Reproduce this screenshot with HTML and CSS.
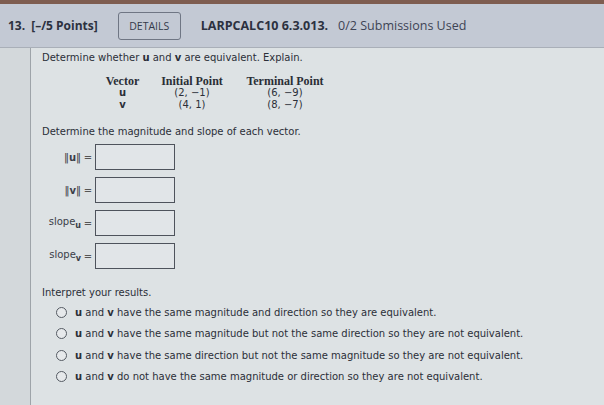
FILE: index.html
```html
<!DOCTYPE html>
<html>
<head>
<meta charset="utf-8">
<link rel="stylesheet" href="styles.css">
</head>
<body>
<div class="topbar"></div>
<div class="header">
  <span class="qnum">13.</span>
  <span class="points">[–/5 Points]</span>
  <span class="details">DETAILS</span>
  <span class="code">LARPCALC10 6.3.013.</span>
  <span class="subs">0/2 Submissions Used</span>
</div>
<div class="main">
  <div class="gutter"></div>
  <div class="content">
    <p class="line first">Determine whether <b>u</b> and <b>v</b> are equivalent. Explain.</p>
    <div class="vtable">
      <div class="th c1">Vector</div><div class="th c2">Initial Point</div><div class="th c3">Terminal Point</div>
      <div class="td c1"><b>u</b></div><div class="td c2">(2, −1)</div><div class="td c3">(6, −9)</div>
      <div class="td c1"><b>v</b></div><div class="td c2">(4, 1)</div><div class="td c3">(8, −7)</div>
    </div>
    <p class="line second">Determine the magnitude and slope of each vector.</p>
    <div class="answers">
      <div class="lbl">‖<b>u</b>‖</div><div class="eq">=</div><div class="box"></div>
      <div class="lbl">‖<b>v</b>‖</div><div class="eq">=</div><div class="box"></div>
      <div class="lbl">slope<sub><b>u</b></sub></div><div class="eq">=</div><div class="box"></div>
      <div class="lbl">slope<sub><b>v</b></sub></div><div class="eq">=</div><div class="box"></div>
    </div>
    <p class="line third">Interpret your results.</p>
    <ul class="opts">
      <li><span class="radio"></span><span><b>u</b> and <b>v</b> have the same magnitude and direction so they are equivalent.</span></li>
      <li><span class="radio"></span><span><b>u</b> and <b>v</b> have the same magnitude but not the same direction so they are not equivalent.</span></li>
      <li><span class="radio"></span><span><b>u</b> and <b>v</b> have the same direction but not the same magnitude so they are not equivalent.</span></li>
      <li><span class="radio"></span><span><b>u</b> and <b>v</b> do not have the same magnitude or direction so they are not equivalent.</span></li>
    </ul>
  </div>
</div>
</body>
</html>
```
FILE: styles.css
```css
html, body {
  margin: 0;
  padding: 0;
  width: 604px;
  height: 405px;
  overflow: hidden;
  background: #dbe0e3;
}
.topbar {
  height: 4px;
  background: #7e5d50;
}
.header {
  height: 44px;
  box-sizing: border-box;
  background: #c3c9d4;
  border-bottom: 1px solid #a9afb8;
  display: flex;
  align-items: center;
  padding-left: 8px;
  font-family: "Open Sans", sans-serif;
  color: #2c3140;
  font-size: 12px;
}
.qnum { font-weight: 700; margin-right: 6px; }
.points { font-weight: 700; }
.details {
  margin-left: 20px;
  width: 63px;
  height: 28px;
  box-sizing: border-box;
  border: 1px solid #6f7684;
  border-radius: 3px;
  display: flex;
  align-items: center;
  justify-content: center;
  font-size: 10.5px;
  color: #333a4a;
}
.code { font-weight: 700; margin-left: 20px; font-size: 12.5px; }
.subs { margin-left: 10px; font-size: 12.5px; color: #3e4454; }
.main {
  display: flex;
  height: 357px;
}
.gutter {
  width: 30px;
  background: #d3d8db;
  border-right: 1px solid #9ea4a9;
}
.content {
  flex: 1;
  padding-left: 11px;
  font-family: "DejaVu Sans", Verdana, sans-serif;
  font-size: 10px;
  color: #2b2f38;
  background: #dde2e4;
}
.line { margin: 0; }
.first { margin-top: 4px; }
.vtable {
  display: grid;
  grid-template-columns: 62px 37px 17px 68px 18px 82px;
  margin-top: 12px;
  line-height: 11.5px;
  white-space: nowrap;
}
.c1 { grid-column: 2; text-align: center; }
.c2 { grid-column: 4; text-align: center; }
.c3 { grid-column: 6; text-align: center; }
.th {
  font-weight: 700;
  font-family: "Liberation Serif", serif;
  font-size: 12px;
  color: #2a2e36;
  line-height: 12px;
}
.second { margin-top: 16px; }
.answers {
  display: grid;
  grid-template-columns: 39px 14px 80px;
  grid-auto-rows: 26px;
  row-gap: 7px;
  margin-top: 7px;
  align-items: center;
}
.lbl { text-align: right; color: #3a3e48; }
.lbl sub { font-size: 8px; }
.eq { text-align: center; color: #555; font-size: 10px; }
.box {
  height: 26px;
  box-sizing: border-box;
  border: 1px solid #4e535c;
  background: #e1e5e8;
}
.third { margin-top: 18px; }
.opts {
  list-style: none;
  margin: 4px 0 0 14px;
  padding: 0;
}
.opts li {
  display: flex;
  align-items: center;
  height: 21.3px;
}
.radio {
  width: 9px;
  height: 9px;
  border: 1px solid #555b63;
  border-radius: 50%;
  margin-right: 8px;
  background: #e6e9eb;
}
```
